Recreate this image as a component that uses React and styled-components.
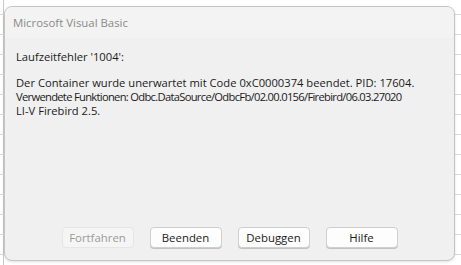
import React from 'react';
import styled, { createGlobalStyle } from 'styled-components';

const GlobalStyle = createGlobalStyle`
  html, body {
    margin: 0;
    padding: 0;
  }
  body {
    width: 461px;
    height: 265px;
    overflow: hidden;
    font-family: "Segoe UI", "Open Sans", sans-serif;
    background-color: #ffffff;
    background-image:
      repeating-linear-gradient(to bottom, transparent 0, transparent 14px, #dadada 14px, #dadada 15px, transparent 15px, transparent 20px),
      linear-gradient(to right, transparent 3px, #c8c8c8 3px, #c8c8c8 4px, transparent 4px);
  }
`;

// Sheet behind the dialog
const Sheet = styled.div`
  width: 461px;
  height: 265px;
  padding: 6px 6px 4px 4px;
  box-sizing: border-box;
`;

const Dialog = styled.div`
  width: 451px;
  height: 255px;
  box-sizing: border-box;
  display: flex;
  flex-direction: column;
  background: #f0f0f0;
  border: 1px solid #c4c4c4;
  border-radius: 8px;
  box-shadow: 0 1px 3px rgba(0, 0, 0, 0.12);
  overflow: hidden;
`;

const TitleBar = styled.div`
  height: 30px;
  flex: none;
  display: flex;
  align-items: center;
  padding: 0 0 1px 8px;
  background: #f3f3f3;
  color: #8a8a8a;
  font-size: 11.4px;
`;

const Body = styled.div`
  flex: 1;
  display: flex;
  flex-direction: column;
  padding: 12px 11px 0;
  color: #1b1b1b;
  font-size: 11.2px;
  line-height: 14px;
`;

const Message = styled.div`
  margin: 0 0 12px;
  white-space: pre;
`;

const Line = styled.div`
  letter-spacing: ${p => p.$tight || 0}px;
`;

const ButtonRow = styled.div`
  margin-top: auto;
  display: flex;
  justify-content: center;
  gap: 16px;
  padding: 0 0 12px 0;
`;

const Button = styled.button`
  width: 72px;
  height: 21px;
  padding: 0;
  box-sizing: border-box;
  font-family: inherit;
  font-size: 11.4px;
  border-radius: 4px;
  border: 1px solid ${p => (p.disabled ? '#e6e6e6' : '#cfcfcf')};
  background: ${p => (p.disabled ? '#f5f5f5' : '#fdfdfd')};
  color: ${p => (p.disabled ? '#9a9a9a' : '#1b1b1b')};
  box-shadow: ${p => (p.disabled ? 'none' : '0 1px 0 #c2c2c2')};
`;

const App = () => (
  <Sheet>
    <GlobalStyle />
    <Dialog>
      <TitleBar>Microsoft Visual Basic</TitleBar>
      <Body>
        <Message>Laufzeitfehler '1004':</Message>
        <Message>
          <Line>Der Container wurde unerwartet mit Code 0xC0000374 beendet. PID: 17604.</Line>
          <Line $tight={-0.7}>Verwendete Funktionen: Odbc.DataSource/OdbcFb/02.00.0156/Firebird/06.03.27020</Line>
          <Line>LI-V Firebird 2.5.</Line>
        </Message>
        <ButtonRow>
          <Button disabled>Fortfahren</Button>
          <Button>Beenden</Button>
          <Button>Debuggen</Button>
          <Button>Hilfe</Button>
        </ButtonRow>
      </Body>
    </Dialog>
  </Sheet>
);

export default App;
